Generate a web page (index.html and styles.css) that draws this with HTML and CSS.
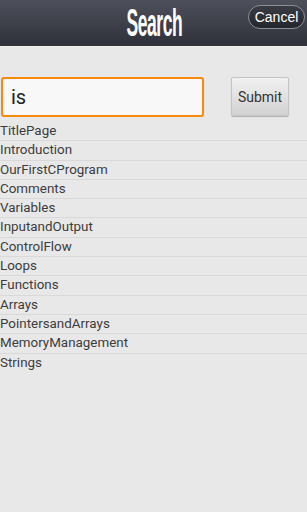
FILE: index.html
```html
<!DOCTYPE html>
<html lang="en">
<head>
  <meta charset="UTF-8">
  <title>Search</title>
  <link rel="stylesheet" href="styles.css">
</head>
<body>

  <div class="topbar">
    <h1 class="title">Search</h1>
    <button class="cancel">Cancel</button>
  </div>

  <div class="searchrow">
    <input type="text" class="query" value="is">
    <button class="submit">Submit</button>
  </div>

  <ul class="results">
    <li>TitlePage</li>
    <li>Introduction</li>
    <li>OurFirstCProgram</li>
    <li>Comments</li>
    <li>Variables</li>
    <li>InputandOutput</li>
    <li>ControlFlow</li>
    <li>Loops</li>
    <li>Functions</li>
    <li>Arrays</li>
    <li>PointersandArrays</li>
    <li>MemoryManagement</li>
    <li>Strings</li>
  </ul>

</body>
</html>
```

FILE: styles.css
```css
body {
  margin: 0;
  background-color: #e8e8e8;
  font-family: Roboto, 'Liberation Sans', sans-serif;
}
.topbar {
  position: relative;
  height: 46px;
  background: linear-gradient(#4d505b, #2f3139);
  border-bottom: 1px solid #f2f2f2;
  display: flex;
  align-items: center;
  justify-content: center;
}
.title {
  margin: 0 0 0 2px;
  color: #fff;
  font-family: 'Liberation Sans', sans-serif;
  font-weight: bold;
  font-size: 38px;
  line-height: 46px;
  letter-spacing: -1px;
  transform: scaleX(0.46);
}
.cancel {
  position: absolute;
  top: 5px;
  right: 2px;
  width: 57px;
  height: 24px;
  padding: 0;
  border-radius: 12px;
  border: 1px solid #8a8d96;
  background: linear-gradient(#3a3c44, #24262c);
  color: #fff;
  font-family: 'Liberation Sans', sans-serif;
  font-size: 14px;
}
.searchrow {
  display: flex;
  align-items: flex-start;
  padding: 30px 0 0 1px;
}
.query {
  width: 203px;
  height: 40px;
  box-sizing: border-box;
  border: 2px solid #f7890f;
  border-radius: 3px;
  background: #f8f8f8;
  padding: 0 8px;
  font-family: Roboto, sans-serif;
  font-size: 20px;
  color: #222;
  outline: none;
}
.submit {
  margin-left: 27px;
  width: 58px;
  height: 39px;
  border: 1px solid #c4c4c4;
  border-radius: 2px;
  background: linear-gradient(#f1f1f1, #d2d2d2);
  box-shadow: 0 1px 1px rgba(0,0,0,0.25);
  font-family: Roboto, sans-serif;
  font-size: 14px;
  color: #333;
  padding: 0;
}
.results {
  list-style: none;
  margin: 5px 0 0;
  padding: 0;
}
.results li {
  line-height: 18.3px;
  font-size: 13.4px;
  color: #3c3c3c;
  border-bottom: 1px solid #d9d9d9;
}
.results li:last-child {
  border-bottom: none;
}
```
